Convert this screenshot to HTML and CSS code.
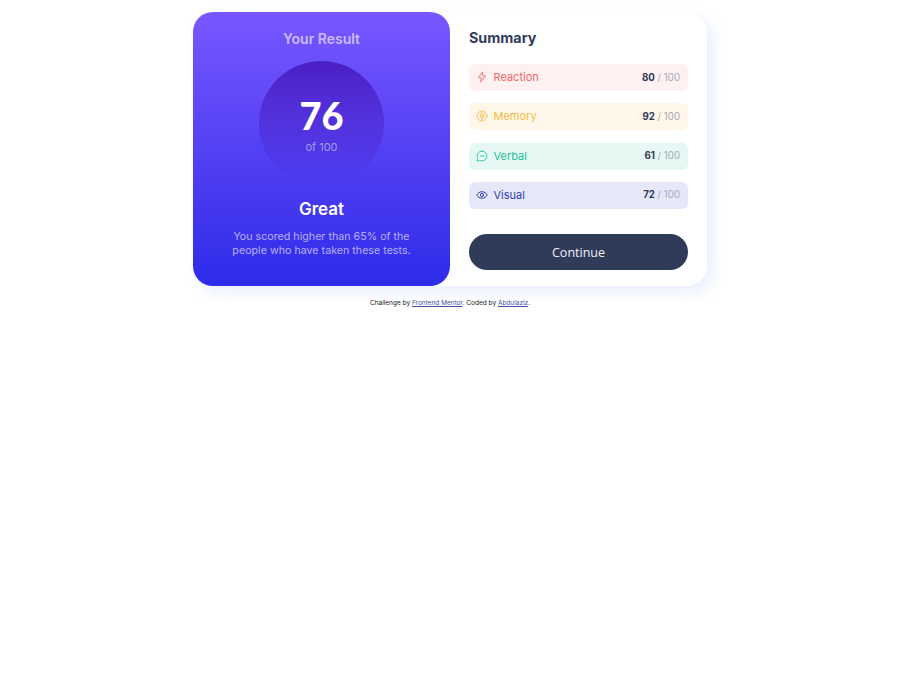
FILE: index.html
```html
<!DOCTYPE html>
<html lang="en">
<head>
    <meta charset="UTF-8">
    <meta name="viewport" content="width=device-width, initial-scale=1.0">
    <title>Results summary</title>
    <link rel="stylesheet" href="styles.css">
</head>
<body>
    <main class="card">
        <section class="result">
            <h2 class="result-title">Your Result</h2>
            <div class="score-circle">
                <span class="score">76</span>
                <span class="score-of">of 100</span>
            </div>
            <h1 class="grade">Great</h1>
            <p class="result-text">You scored higher than 65% of the people who have taken these tests.</p>
        </section>
        <section class="summary">
            <h2 class="summary-title">Summary</h2>
            <ul class="stats">
                <li class="stat reaction">
                    <svg class="stat-icon" viewBox="0 0 20 20" fill="none" stroke="currentColor" stroke-width="1.4" stroke-linejoin="round">
                        <path d="M11 1.500 4 11h4.600L7.800 18.500l8-10.500h-4.700L11 1.500Z"/>
                    </svg>
                    <span class="stat-name">Reaction</span>
                    <span class="stat-value"><b>80</b> <i>/</i> 100</span>
                </li>
                <li class="stat memory">
                    <svg class="stat-icon" viewBox="0 0 20 20" fill="none" stroke="currentColor" stroke-width="1.4" stroke-linecap="round">
                        <circle cx="10" cy="10" r="8.300"/>
                        <path d="M7 5.500v4.500M13 5.500v4.500M10 4v13M7 10c0 1.800 1.300 2.800 3 2.800s3-1 3-2.800"/>
                    </svg>
                    <span class="stat-name">Memory</span>
                    <span class="stat-value"><b>92</b> <i>/</i> 100</span>
                </li>
                <li class="stat verbal">
                    <svg class="stat-icon" viewBox="0 0 20 20" fill="none" stroke="currentColor" stroke-width="1.4" stroke-linecap="round" stroke-linejoin="round">
                        <path d="M10 1.700a8.300 8.300 0 0 0-7.200 12.400L1.700 18.300l4.400-1A8.300 8.300 0 1 0 10 1.700Z"/>
                        <path d="M7 10h6"/>
                    </svg>
                    <span class="stat-name">Verbal</span>
                    <span class="stat-value"><b>61</b> <i>/</i> 100</span>
                </li>
                <li class="stat visual">
                    <svg class="stat-icon" viewBox="0 0 20 20" fill="none" stroke="currentColor" stroke-width="1.600">
                        <path d="M1.200 10C3.300 6.300 6.300 4.600 10 4.600s6.700 1.700 8.800 5.400c-2.100 3.700-5.100 5.400-8.800 5.400S3.300 13.700 1.200 10Z"/>
                        <circle cx="10" cy="10" r="2.700"/>
                    </svg>
                    <span class="stat-name">Visual</span>
                    <span class="stat-value"><b>72</b> <i>/</i> 100</span>
                </li>
            </ul>
            <button class="continue-btn">Continue</button>
        </section>
    </main>
    <footer class="attribution">
        Challenge by <a href="#">Frontend Mentor</a>. Coded by <a href="#">Abdulaziz</a>.
    </footer>
</body>
</html>
```
FILE: styles.css
```css
* {
    margin: 0;
    padding: 0;
    box-sizing: border-box;
}

body {
    font-family: 'Inter', 'Liberation Sans', sans-serif;
    background: #fff;
    padding-top: 12px;
}

.card {
    display: flex;
    width: 514px;
    height: 274px;
    margin: 0 auto;
    background: #fff;
    border-radius: 20px;
    box-shadow: 6px 6px 14px rgba(200, 215, 255, 0.4);
}

.result {
    width: 257px;
    display: flex;
    flex-direction: column;
    align-items: center;
    padding-top: 18px;
    text-align: center;
    border-radius: 20px;
    background: linear-gradient(180deg, #7857ff, #2e2be9);
}

.result-title {
    font-size: 14px;
    line-height: 18px;
    font-weight: 600;
    color: #c8bdff;
}

.score-circle {
    width: 125px;
    height: 125px;
    margin-top: 13px;
    display: flex;
    flex-direction: column;
    align-items: center;
    padding-top: 33px;
    border-radius: 50%;
    background: linear-gradient(180deg, #4a1fc4, rgba(36, 33, 201, 0));
}

.score {
    font-size: 38px;
    line-height: 42px;
    font-weight: 900;
    color: #fff;
    font-family: 'Lato', sans-serif;
}

.score-of {
    font-size: 11px;
    line-height: 14px;
    margin-top: 4px;
    color: #a79cf0;
}

.grade {
    font-size: 17px;
    line-height: 22px;
    font-weight: 600;
    color: #fff;
    margin-top: 12px;
}

.result-text {
    width: 190px;
    margin-top: 10px;
    font-size: 10.700px;
    line-height: 14px;
    color: #b6b0f7;
}

.summary {
    flex: 1;
    padding: 17px 19px 16px;
    display: flex;
    flex-direction: column;
}

.summary-title {
    font-size: 14.300px;
    line-height: 18px;
    font-weight: 700;
    color: #303b5a;
}

.stats {
    list-style: none;
    display: flex;
    flex-direction: column;
    gap: 12.300px;
    margin-top: 17px;
}

.stat {
    height: 27px;
    display: flex;
    align-items: center;
    padding: 0 8px 1px 7px;
    border-radius: 6px;
    font-size: 11px;
}

.stat-icon {
    flex: none;
    width: 12px;
    height: 12px;
    margin-right: 5.500px;
}

.stat-name {
    flex: 1;
}

.stat-value {
    font-size: 9.700px;
    color: #a5a8b5;
}

.stat-value b {
    font-weight: 700;
    color: #303b5a;
}

.stat-value i {
    font-style: normal;
}

.reaction {
    background: #fff1f1;
    color: #ef6767;
}

.memory {
    background: #fff7e9;
    color: #f5bb45;
}

.verbal {
    background: #e6f8f3;
    color: #1fc09a;
}

.visual {
    background: #e6e8fa;
    color: #2f3bb0;
}

.continue-btn {
    height: 36px;
    margin-top: auto;
    border: none;
    border-radius: 18px;
    background: #303b5a;
    color: #f0f2f8;
    font-family: 'Open Sans', sans-serif;
    font-size: 12.500px;
    cursor: pointer;
}

.attribution {
    margin-top: 13px;
    text-align: center;
    font-size: 6.500px;
    line-height: 9px;
    color: #222;
}

.attribution a {
    color: #3e52a3;
}
```
